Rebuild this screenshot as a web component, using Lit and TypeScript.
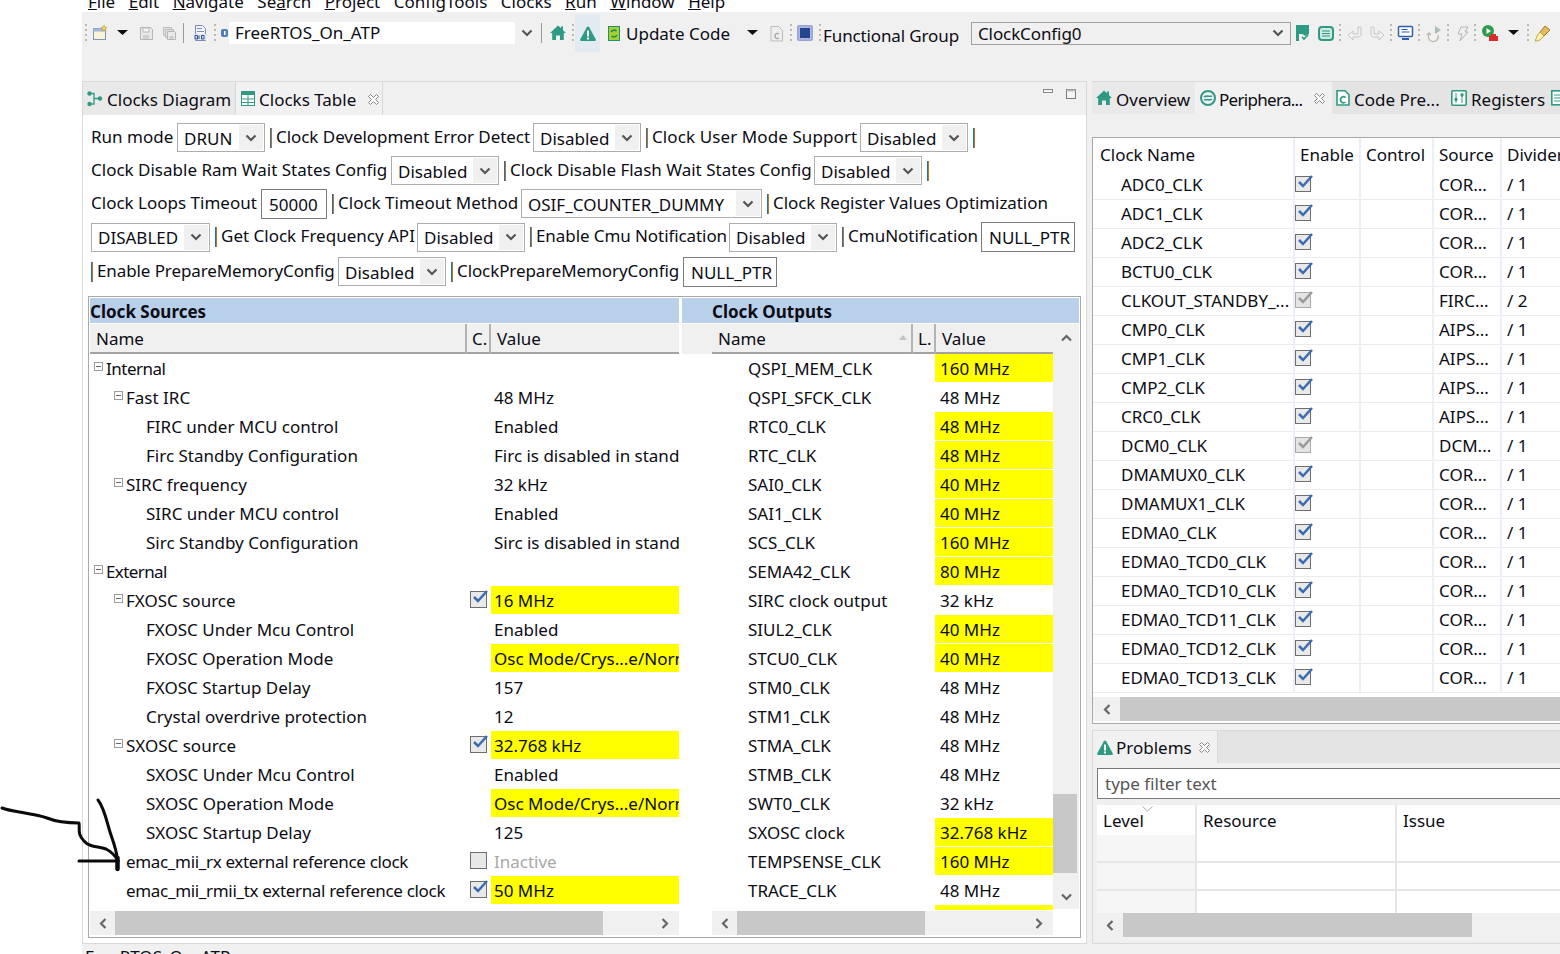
import { LitElement, html, css, svg } from "lit";
import { customElement } from "lit/decorators.js";

const T = "#2f9a83";
const icons: Record<string, any> = {
  grip: svg`<g fill="#bdb8ac"><rect x="0" y="0" width="2" height="2"/><rect x="0" y="5" width="2" height="2"/><rect x="0" y="10" width="2" height="2"/><rect x="0" y="15" width="2" height="2"/></g>`,
  newf: svg`<rect x="1.500" y="3.500" width="12" height="11" fill="#fbf3d6" stroke="#7d97b8"/><rect x="1.500" y="3.500" width="12" height="3" fill="#9fb9d8"/><path d="M12 0l1 2 2 .5-1.500 1.500.5 2-2-1-2 1 .5-2L9 2.500l2-.5z" fill="#f3d35b" stroke="#b89b3a" stroke-width=".6"/>`,
  drop: svg`<path d="M0 0h11L5.500 5z" fill="#111"/>`,
  save: svg`<path d="M1.500 1.500h10l2 2v10h-12z" fill="#e8e8e8" stroke="#b5b5b5"/><rect x="4" y="2" width="6" height="4" fill="#f6f6f6" stroke="#bbb"/><rect x="4" y="9" width="6" height="4" fill="#d0d0d0"/>`,
  saveall: svg`<path d="M1.500 1.500h8v8h-8z" fill="#e4e4e4" stroke="#bcbcbc"/><path d="M3.500 3.500h8v8h-8z" fill="#e4e4e4" stroke="#bcbcbc"/><path d="M5.500 5.500h7l1 1v7h-8z" fill="#e8e8e8" stroke="#b5b5b5"/><rect x="7.500" y="10" width="4" height="3" fill="#ccc"/>`,
  sep: svg`<rect x="0" y="0" width="1" height="20" fill="#9a9a9a"/>`,
  bin: svg`<path d="M1.500 .5h7l3 3v12h-10z" fill="#f4f4f8" stroke="#7b8db0"/><rect x="3" y="3" width="5" height="1" fill="#7b8db0"/><rect x="3" y="6" width="7" height="1" fill="#7b8db0"/><rect x="0" y="9" width="12.500" height="6" fill="#dfe6f2"/><path d="M1 10.500h2.500v3.500H1zM5 10.500v3.500M7.500 10.500h2.500v3.500H7.500z" fill="none" stroke="#2c4d8a"/>`,
  info: svg`<rect x="0" y="0" width="7" height="8" rx="2" fill="#4f7fb8"/><rect x="3" y="2" width="1.500" height="4" fill="#fff"/>`,
  chev: svg`<path d="M1.500 1.500L6 6l4.500-4.500" fill="none" stroke="#555" stroke-width="2.200"/>`,
  home: svg`<path d="M8 .5L0 8h2.200v7H6v-4.500h4V15h3.800V8H16l-3-2.800V1.500h-2v1.800z" fill="${T}"/>`,
  warn: svg`<path d="M8 .5c.5 0 .9.300 1.200.8l6.500 12c.5 1-.1 1.700-1 1.700H1.300c-.9 0-1.500-.7-1-1.700l6.500-12C7.100.8 7.500.5 8 .5z" fill="${T}"/><rect x="7" y="4.500" width="2" height="6" fill="#fff"/><rect x="7" y="11.500" width="2" height="2" fill="#fff"/>`,
  upd: svg`<rect x=".5" y=".5" width="11" height="14" fill="#a7d129" stroke="#1f8f7d"/><path d="M3 6c1-2 4-2.500 5.500-1M9 9c-1 2-4 2.500-5.500 1" fill="none" stroke="#1e8a5a" stroke-width="1.600"/>`,
  cdoc: svg`<path d="M1 .5h7.500l4 4v10.500H1z" fill="#eee" stroke="#bcbcbc"/><path d="M9 8a2.500 2.500 0 1 0 0 4" fill="none" stroke="#aaa" stroke-width="1.400"/>`,
  chip: svg`<rect x="0" y="0" width="16" height="16" rx="2" fill="#9aa4d4"/><path d="M3 1v14M5.500 1v14M8 1v14M10.500 1v14M13 1v14M1 3h14M1 5.500h14M1 8h14M1 10.500h14M1 13h14" stroke="#c9cfe8" stroke-width=".6"/><rect x="3" y="3" width="10" height="10" fill="#23478f"/>`,
  flag: svg`<path d="M0 0h13v9l-4 2-2-2 -1 1v-1H3v7H0z" fill="${T}"/><path d="M6 12l2 2 4-4" fill="none" stroke="${T}" stroke-width="1.600"/>`,
  gdoc: svg`<rect x="1" y="1" width="14" height="13" rx="3" fill="#cfeae3" stroke="${T}" stroke-width="2"/><path d="M4 5h8M4 7.500h8M4 10h8" stroke="${T}"/><path d="M12 14l3-3v3z" fill="${T}"/>`,
  undo: svg`<path d="M14 1v7c0 2-1 3-3 3H6v3L1 9l5-4v3h5V1z" fill="#f2f2f2" stroke="#c6c6c6"/>`,
  redo: svg`<path d="M1 1v7c0 2 1 3 3 3h5v3l5-5-5-4v3H4V1z" fill="#f2f2f2" stroke="#c6c6c6"/>`,
  mon: svg`<rect x=".5" y=".5" width="14" height="10" rx="1" fill="#fff" stroke="#2b62a8" stroke-width="1.500"/><path d="M3.500 3.500h6M3.500 6h8" stroke="#2b62a8"/><rect x="4" y="12" width="7" height="2" fill="#2b62a8"/>`,
  debug: svg`<path d="M9 0l6 4-6 4z" fill="#aebcb8"/><path d="M3 8a5 5 0 1 0 9 1M1 9l2-2 2 2" fill="#f2f2f2" stroke="#bfb8a8" stroke-width="1.300"/>`,
  bolt: svg`<path d="M5 1h7L9 6h3l-8 9 2-7H2z" fill="#eee" stroke="#b5b5b5"/>`,
  run: svg`<circle cx="6" cy="6" r="6" fill="#2d9a4e"/><path d="M4.500 3l4.500 3-4.500 3z" fill="#fff"/><rect x="7" y="11" width="9" height="5" fill="#d92b2b"/><rect x="9" y="9" width="5" height="2" fill="#d92b2b"/>`,
  brush: svg`<path d="M11 1l5 4-6 6-4-4z" fill="#e6b75d" stroke="#a67c2d"/><path d="M6 7l4 4-4 4c-2 1-4 1-5 1 1-1 1-3 2-5z" fill="#fff3a8" stroke="#bfa44a"/>`,
  diagram: svg`<circle cx="2.500" cy="2.500" r="2.200" fill="${T}"/><circle cx="2.500" cy="13" r="2.200" fill="${T}"/><circle cx="13" cy="7.500" r="2.200" fill="${T}"/><path d="M2.500 2.500H7V13H2.500M7 7.500h6" fill="none" stroke="${T}" stroke-width="1.300"/>`,
  table: svg`<rect x=".5" y=".5" width="13" height="14" fill="#fff" stroke="${T}"/><rect x="0" y="0" width="14" height="4" fill="${T}"/><path d="M0 8h14M0 11.500h14M7 4v11" stroke="${T}"/>`,
  x: svg`<path d="M1.500 3.500L3.500 1.500 6.500 4.500 9.500 1.500 11.500 3.500 8.500 6.500 11.500 9.500 9.500 11.500 6.500 8.500 3.500 11.500 1.500 9.500 4.500 6.500z" fill="#fff" stroke="#858585"/>`,
  periph: svg`<circle cx="8" cy="8" r="7" fill="none" stroke="${T}" stroke-width="2"/><path d="M4 7c2-2 5 0 8-1M4 10c3-1 6 1 8-1" fill="none" stroke="${T}" stroke-width="1.600"/>`,
  code: svg`<path d="M1 .8h8l4 4V15H1z" fill="#fff" stroke="${T}" stroke-width="1.600"/><path d="M9.500 7.500a3 3 0 1 0 0 4.500" fill="none" stroke="${T}" stroke-width="1.600"/>`,
  regs: svg`<rect x=".8" y=".8" width="14.400" height="14.400" rx="1" fill="#fff" stroke="${T}" stroke-width="1.600"/><path d="M5 3v10M11 3v10" stroke="${T}"/><circle cx="5" cy="9.500" r="1.700" fill="${T}"/><circle cx="11" cy="5" r="1.700" fill="${T}"/>`,
  list: svg`<rect x=".8" y=".8" width="12" height="14" fill="#fff" stroke="${T}" stroke-width="1.600"/><path d="M3 5h8M3 8h8M3 11h8" stroke="${T}"/>`,
  min: svg`<rect x=".5" y=".5" width="9" height="3" fill="#f5f5f5" stroke="#8a8a8a"/>`,
  max: svg`<rect x=".5" y=".5" width="9" height="9" fill="#f5f5f5" stroke="#7a7a7a"/><rect x=".5" y=".5" width="9" height="2" fill="#bbb"/>`,
  left: svg`<path d="M6.500 1L2 5.500l4.500 4.500" fill="none" stroke="#666" stroke-width="2.200"/>`,
  right: svg`<path d="M1.500 1L6 5.500 1.500 10" fill="none" stroke="#666" stroke-width="2.200"/>`,
  up: svg`<path d="M1 6.500L5.500 2 10 6.500" fill="none" stroke="#666" stroke-width="2.200"/>`,
  down: svg`<path d="M1 1.500L5.500 6 10 1.500" fill="none" stroke="#666" stroke-width="2.200"/>`,
  sort: svg`<path d="M0 5L4 0l4 5z" fill="#c4c4c4"/>`,
  vee: svg`<path d="M.5.500L5.500 5l5-4.500" fill="none" stroke="#aaa"/>`,
};

const ic = (n: string, w: number, h: number, cls = "") =>
  html`<svg class="ic ${cls}" width=${w} height=${h} viewBox="0 0 ${w} ${h}">${icons[n]}</svg>`;

const toolbarA: [number, string, number, number][] = [
  [85, "grip", 2, 18], [92, "newf", 16, 16], [117, "drop", 11, 6], [139, "save", 15, 15], [162, "saveall", 15, 15],
  [183, "sep", 1, 20], [194, "bin", 13, 16], [214, "grip", 2, 18], [221, "info", 7, 8],
];

const leftRows: [number, string, string, string, string][] = [
  [0, "e", "Internal", "", ""], [1, "e", "Fast IRC", "48 MHz", ""], [2, "", "FIRC under MCU control", "Enabled", ""],
  [2, "", "Firc Standby Configuration", "Firc is disabled in standby", ""], [1, "e", "SIRC frequency", "32 kHz", ""],
  [2, "", "SIRC under MCU control", "Enabled", ""], [2, "", "Sirc Standby Configuration", "Sirc is disabled in standby", ""],
  [0, "e", "External", "", ""], [1, "e", "FXOSC source", "16 MHz", "cy"], [2, "", "FXOSC Under Mcu Control", "Enabled", ""],
  [2, "", "FXOSC Operation Mode", "Osc Mode/Crys...e/Normal", "y"], [2, "", "FXOSC Startup Delay", "157", ""],
  [2, "", "Crystal overdrive protection", "12", ""], [1, "e", "SXOSC source", "32.768 kHz", "cy"],
  [2, "", "SXOSC Under Mcu Control", "Enabled", ""], [2, "", "SXOSC Operation Mode", "Osc Mode/Crys...e/Normal", "y"],
  [2, "", "SXOSC Startup Delay", "125", ""], [1, "", "emac_mii_rx external reference clock", "Inactive", "cd"],
  [1, "", "emac_mii_rmii_tx external reference clock", "50 MHz", "cy"],
];
const nameSpacing: Record<string, number> = {
  Internal: -0.5, External: -0.6,
  "emac_mii_rx external reference clock": -0.33, "emac_mii_rmii_tx external reference clock": -0.32,
};
const rightRows: [string, string, boolean][] = [
  ["QSPI_MEM_CLK", "160 MHz", true], ["QSPI_SFCK_CLK", "48 MHz", false], ["RTC0_CLK", "48 MHz", true], ["RTC_CLK", "48 MHz", true],
  ["SAI0_CLK", "40 MHz", true], ["SAI1_CLK", "40 MHz", true], ["SCS_CLK", "160 MHz", true], ["SEMA42_CLK", "80 MHz", true],
  ["SIRC clock output", "32 kHz", false], ["SIUL2_CLK", "40 MHz", true], ["STCU0_CLK", "40 MHz", true], ["STM0_CLK", "48 MHz", false],
  ["STM1_CLK", "48 MHz", false], ["STMA_CLK", "48 MHz", false], ["STMB_CLK", "48 MHz", false], ["SWT0_CLK", "32 kHz", false],
  ["SXOSC clock", "32.768 kHz", true], ["TEMPSENSE_CLK", "160 MHz", true], ["TRACE_CLK", "48 MHz", false], ["", "", true],
];
const clocks: [string, boolean, string, string][] = [
  ["ADC0_CLK", true, "COR...", "/ 1"], ["ADC1_CLK", true, "COR...", "/ 1"], ["ADC2_CLK", true, "COR...", "/ 1"],
  ["BCTU0_CLK", true, "COR...", "/ 1"], ["CLKOUT_STANDBY_...", false, "FIRC...", "/ 2"], ["CMP0_CLK", true, "AIPS...", "/ 1"],
  ["CMP1_CLK", true, "AIPS...", "/ 1"], ["CMP2_CLK", true, "AIPS...", "/ 1"], ["CRC0_CLK", true, "AIPS...", "/ 1"],
  ["DCM0_CLK", false, "DCM...", "/ 1"], ["DMAMUX0_CLK", true, "COR...", "/ 1"], ["DMAMUX1_CLK", true, "COR...", "/ 1"],
  ["EDMA0_CLK", true, "COR...", "/ 1"], ["EDMA0_TCD0_CLK", true, "COR...", "/ 1"], ["EDMA0_TCD10_CLK", true, "COR...", "/ 1"],
  ["EDMA0_TCD11_CLK", true, "COR...", "/ 1"], ["EDMA0_TCD12_CLK", true, "COR...", "/ 1"], ["EDMA0_TCD13_CLK", true, "COR...", "/ 1"],
];

type F = ["l", string, number, number?] | ["p"] | ["s", string, number] | ["i", string, number];
const form: F[][] = [
  [["l", "Run mode", 83], ["s", "DRUN", 88], ["p"], ["l", "Clock Development Error Detect", 254, -0.05], ["s", "Disabled", 108], ["p"], ["l", "Clock User Mode Support", 205, 0.1], ["s", "Disabled", 108], ["p"]],
  [["l", "Clock Disable Ram Wait States Config", 297], ["s", "Disabled", 108], ["p"], ["l", "Clock Disable Flash Wait States Config", 301], ["s", "Disabled", 108], ["p"]],
  [["l", "Clock Loops Timeout", 167], ["i", "50000", 66], ["p"], ["l", "Clock Timeout Method", 180], ["s", "OSIF_COUNTER_DUMMY", 241], ["p"], ["l", "Clock Register Values Optimization", 274, -0.07]],
  [["s", "DISABLED", 119], ["p"], ["l", "Get Clock Frequency API", 193], ["s", "Disabled", 108], ["p"], ["l", "Enable Cmu Notification", 190, -0.08], ["s", "Disabled", 108], ["p"], ["l", "CmuNotification", 130], ["i", "NULL_PTR", 94]],
  [["p"], ["l", "Enable PrepareMemoryConfig", 238, -0.1], ["s", "Disabled", 108], ["p"], ["l", "ClockPrepareMemoryConfig", 223, -0.1], ["i", "NULL_PTR", 94]],
];

const menu: [string, string, string][] = [
  ["", "F", "ile"], ["", "E", "dit"], ["", "N", "avigate"], ["Se", "a", "rch"], ["", "P", "roject"], ["ConfigTools", "", ""],
  ["Clocks", "", ""], ["", "R", "un"], ["", "W", "indow"], ["", "H", "elp"],
];

@customElement("app-root")
export class AppRoot extends LitElement {
  static styles = css`
    :host { display: block; width: 1560px; height: 954px; overflow: hidden; position: relative; background: #fff;
      font-family: "Noto Sans", "Open Sans", sans-serif; font-size: 17px; color: #0c0c14; }
    * { box-sizing: border-box; }
    .ic { display: block; flex: none; overflow: visible; }
    .menu { height: 12px; display: flex; align-items: flex-end; padding-left: 88px; gap: 13.5px; overflow: hidden; line-height: 20px; white-space: nowrap; }
    .menu span { flex: none; }
    .main { margin-left: 82px; height: 942px; background: #f0f0f0; display: flex; flex-direction: column; }
    .toolbar { height: 40px; padding-top: 2px; display: flex; align-items: center; position: relative; white-space: nowrap; flex: none; }
    .tb { flex: none; }
    .tb-gap { height: 29px; flex: none; }
    .combo { background: #fff; height: 22px; width: 286px; margin-left: 1px; padding-left: 6px; line-height: 22px; flex: none; }
    .combo2 { width: 320px; height: 23px; background: #f0f0f0; border: 1px solid #a0a0a0; display: flex; justify-content: space-between; align-items: center; padding: 0 8px 0 6px; flex: none; letter-spacing: -.1px; }
    .tile { width: 25px; height: 38px; background: #e3ebf2; display: flex; align-items: center; justify-content: center; flex: none; align-self: flex-start; margin-top: 0; }
    .fg { flex: none; margin-top: 4px; letter-spacing: -.13px; }
    .panels { display: flex; height: 863px; flex: none; }
    .lp { width: 1005px; border: 1px solid #d9d9d9; background: #fff; display: flex; flex-direction: column; flex: none; }
    .tabs { height: 33px; display: flex; background: #f0f0f0; flex: none; position: relative; align-items: stretch; white-space: nowrap; }
    .tab { display: flex; align-items: center; gap: 4px; padding-left: 4px; flex: none; background: #e9e9e9; }
    .tab.on { background: #f1f1f1; border-right: 1px solid #d9d9d9; border-left: 1px solid #d9d9d9; }
    .lp .tab.t1 { width: 152px; } .lp .tab.t2 { width: 148px; padding-left: 5px; gap: 4px; }
    .tt { margin-top: 2px; }
    .tab .x { margin-left: 7px; margin-top: 1px; }
    .winbtns { margin-left: auto; display: flex; gap: 13px; padding: 7px 10px 0 0; align-items: flex-start; }
    .lbody { flex: 1; display: flex; flex-direction: column; padding: 6px 5px 0 5px; min-height: 0; }
    .row { display: flex; align-items: center; height: 33px; padding-left: 3px; white-space: nowrap; flex: none; }
    .row.r3 { height: 34px; } .row.r4 { height: 35px; }
    .row .l { line-height: 24px; margin-top: -2px; flex: none; }
    .pipe { width: 2px; height: 20px; background: #2a6cb0; border-right: 1px solid #b8791e; margin: 0 4px 0 5px; flex: none; }
    .pipe:first-child { margin-left: 0; }
    .sel { height: 29px; margin: 0 0 0 3px; border: 1px solid #adadad; display: flex; align-items: center; justify-content: space-between; padding: 0 1px 0 6px; flex: none; line-height: 26px; }
    .sel:first-child { margin-left: 0; }
    .sel b { font-weight: 400; margin-top: 2px; }
    .btn { width: 24px; height: 25px; background: #f0f0f0; display: flex; align-items: center; justify-content: center; flex: none; }
    .inp { height: 30px; margin: 0 0 0 3px; border: 1px solid #7a7a7a; padding: 1px 0 0 7px; line-height: 28px; flex: none; }
    .frame { height: 642px; margin-top: 7px; border: 1px solid #a9a9a9; padding: 1px; position: relative; display: flex; gap: 3px; flex: none; }
    .col { display: flex; flex-direction: column; flex: none; position: relative; }
    .band { height: 26px; background: #b9d0ea; font-weight: 700; line-height: 27px; flex: none; white-space: nowrap; border-bottom: 1px solid #fff; }
    .head { height: 30px; display: flex; background: #f0f0f0; flex: none; }
    .h { border-right: 2px solid #b4b4b4; border-bottom: 2px solid #a3a3a3; padding-left: 6px; line-height: 30px; flex: none; overflow: hidden; position: relative; background: #f0f0f0; white-space: nowrap; }
    .h.n { width: 377px; } .h.c { width: 24px; padding-left: 5px; } .h.v { width: 188px; border-right: 0; }
    .h.n2 { width: 201px; } .h.c2 { width: 23px; padding-left: 5px; } .h.v2 { width: 118px; border-right: 0; }
    .blank { width: 30px; flex: none; }
    .sortm { position: absolute; right: 4px; top: 11px; }
    .rows { height: 556px; overflow: hidden; flex: none; }
    .tr { height: 29px; display: flex; align-items: flex-start; white-space: nowrap; overflow: hidden; }
    .tree { width: 377px; height: 28px; line-height: 29px; display: flex; align-items: center; flex: none; }
    .tree.d0 { padding-left: 4px; } .tree.d1 { padding-left: 24px; } .tree.d2 { padding-left: 56px; }
    .tree.d1.plain { padding-left: 36px; }
    .exp { width: 9px; height: 9px; border: 1px solid #9c9c9c; margin-right: 3px; position: relative; flex: none; margin-top: -3px; }
    .exp::after { content: ""; position: absolute; left: 1px; right: 1px; top: 3px; height: 1px; background: #666; }
    .chk { width: 24px; flex: none; padding: 5px 0 0 3px; }
    .val { width: 188px; height: 28px; line-height: 29px; padding-left: 3px; overflow: hidden; flex: none; }
    .yl { background: #ff0; }
    .off { color: #a8a8a8; }
    .cb { display: block; width: 17px; height: 17px; border: 1px solid #6e6e6e; background: #e9e9e9; position: relative; flex: none; }
    .cb svg { position: absolute; left: 1px; top: -3px; overflow: visible; }
    .cb.dis { border-color: #aaa; background: #e4e4e4; }
    .cb.ina { border-color: #6e6e6e; background: #e8e8e8; }
    .rname { width: 223px; padding-left: 36px; flex: none; margin-left: 30px; line-height: 29px; }
    .rval { width: 118px; height: 28px; line-height: 29px; padding-left: 5px; flex: none; overflow: hidden; }
    .hs { height: 24px; display: flex; align-items: center; flex: none; background: #f0f0f0; position: relative; margin-top: 1px; }
    .hs .cell { width: 25px; display: flex; justify-content: center; flex: none; }
    .hs .th { height: 100%; background: #c8c8c8; flex: none; }
    .hs .end { margin-left: auto; width: 28px; }
    .vs { width: 26px; background: #f0f0f0; height: 585px; position: absolute; right: 0; top: 26px; display: flex; flex-direction: column; align-items: center; }
    .vs .th { position: absolute; left: 0; right: 2px; top: 470px; height: 79px; background: #c8c8c8; }
    .vs .a1 { margin-top: 10px; } .vs .a2 { position: absolute; bottom: 8px; }
    .rcol { display: flex; flex-direction: column; flex: 1; min-width: 0; margin-left: 5px; }
    .rtop { height: 643px; flex: none; display: flex; flex-direction: column; position: relative; }
    .rtabs { background: #e4e4e4; border-top: 1px solid #d9d9d9; }
    .rtabs .tab { padding-left: 4px; }
    .rtabs .tt { margin-top: 3px; }
    .rtabs .t1 { width: 103px; } .rtabs .t2 { width: 137px; background: #f1f1f1; gap: 3px; padding-left: 5px; }
    .rtabs .t3 { width: 115px; background: #e4e4e4; } .rtabs .t4 { width: 100px; background: #e4e4e4; } .rtabs .t5 { width: 20px; background: #e4e4e4; }
    .rtabs .t2 .x { margin-left: 8px; }
    .narrow { letter-spacing: -.7px; }
    .rspace { height: 23px; flex: none; }
    .rframe { flex: 1; border: 1px solid #a9a9a9; border-right: 0; background: #fff; min-height: 0; display: flex; flex-direction: column; overflow: hidden; }
    .chead { height: 33px; display: flex; flex: none; line-height: 34px; }
    .chead div, .ctr div { flex: none; border-right: 2px solid #ebf0f8; white-space: nowrap; }
    .c1 { width: 202px; padding-left: 7px; } .c2 { width: 66px; padding-left: 5px; } .c3 { width: 73px; padding-left: 5px; } .c4 { width: 68px; padding-left: 5px; } .c5 { width: 70px; padding-left: 5px; }
    .ctr { height: 29px; display: flex; align-items: center; border-bottom: 1px solid #ebebeb; }
    .ctr div { height: 29px; line-height: 28px; }
    .ctr .c1 { padding-left: 28px; }
    .ctr .c2 { padding-left: 0; display: flex; align-items: center; }
    .ctr .cb { width: 16px; height: 16px; margin-top: -3px; }
    .rows2 { height: 526px; overflow: hidden; flex: none; }
    .hs2 { height: 24px; margin-top: 0; }
    .hs2 .cell { width: 27px; }
    .rbot { height: 214px; margin-top: 6px; border: 1px solid #d9d9d9; border-right: 0; flex: none; display: flex; flex-direction: column; }
    .ptabs { height: 32px; background: #e4e4e4; display: flex; flex: none; }
    .ptabs .tab { width: 125px; background: #f1f1f1; padding-left: 4px; gap: 3px; border-right: 1px solid #d9d9d9; }
    .ptabs .x { margin-left: 3px; margin-top: 0; }
    .filter { height: 31px; margin: 5px 0 0 4px; border: 1px solid #7a7a7a; border-right: 0; background: #fff; color: #555; padding-left: 7px; line-height: 30px; flex: none; }
    .ptable { height: 109px; margin: 5px 0 0 4px; background: #fff; flex: none; display: flex; position: relative; border-top: 1px solid #eee; }
    .pc { border-right: 2px solid #e6e6e6; flex: none; display: flex; flex-direction: column; }
    .pc1 { width: 100px; background: #f6f6f6; } .pc2 { width: 200px; } .pc3 { flex: 1; border-right: 0; }
    .ph { height: 30px; padding-left: 6px; line-height: 32px; position: relative; background: #fff; }
    .pr { height: 28px; border-bottom: 2px solid #e6e6e6; flex: none; }
    .vee { position: absolute; left: 45px; top: 1px; }
    .hs3 { margin: 0 0 0 4px; height: 24px; }
    .hs3 .cell { width: 26px; }
    .status { height: 8px; overflow: hidden; line-height: 20px; padding-left: 3px; margin-top: 3px; white-space: nowrap; flex: none; }
    .ink { position: absolute; left: 0; top: 790px; pointer-events: none; }
  `;

  private flow(items: [number, string, number, number][]) {
    let p = 82;
    return items.map(([x, n, w, h]) => {
      const m = x - p;
      p = x + w;
      return this.tb(n, w, h, m);
    });
  }

  private tb(n: string, w: number, h: number, m: number) {
    return html`<span class="tb" style="margin-left:${m}px">${ic(n, w, h)}</span>`;
  }

  private field(f: F) {
    if (f[0] === "l") return html`<span class="l" style="width:${f[2]}px;letter-spacing:${f[3] ?? 0}px">${f[1]}</span>`;
    if (f[0] === "p") return html`<span class="pipe"></span>`;
    if (f[0] === "s") return html`<span class="sel" style="width:${f[2]}px"><b>${f[1]}</b><span class="btn">${ic("chev", 12, 8)}</span></span>`;
    return html`<span class="inp" style="width:${f[2]}px">${f[1]}</span>`;
  }

  private tick(color: string) {
    return html`<svg width="18" height="15" viewBox="0 0 18 15"><path d="M2 8l4 4 9-10" fill="none" stroke="${color}" stroke-width="2.500"/></svg>`;
  }

  private check(dis = false) {
    return html`<span class="cb ${dis ? "dis" : ""}">${this.tick(dis ? "#9a9a9a" : "#3a6cb0")}</span>`;
  }

  render() {
    return html`
      <div class="menu">${menu.map(([a, u, b]) => html`<span>${a}${u ? html`<u>${u}</u>` : ""}${b}</span>`)}</div>
      <div class="main">
        <div class="toolbar">
          ${this.flow(toolbarA)}
          <span class="combo">FreeRTOS_On_ATP</span>
          ${this.tb("chev", 12, 8, 6)}
          ${this.tb("sep", 1, 20, 8)}
          ${this.tb("home", 16, 16, 8)}
          ${this.tb("grip", 2, 18, 6)}
          <span class="tile" style="margin-left:1px">${ic("warn", 16, 15)}</span>
          ${this.tb("upd", 12, 15, 8)}
          <span class="tb" style="margin-left:6px">Update Code</span>
          ${this.tb("drop", 11, 6, 17)}
          ${this.tb("cdoc", 13, 15, 12)}
          ${this.tb("grip", 2, 18, 7)}
          ${this.tb("chip", 16, 16, 5)}
          ${this.tb("grip", 2, 18, 6)}
          <span class="fg" style="margin-left:2px">Functional Group</span>
          <span style="margin-left:12px" class="combo2"><span>ClockConfig0</span>${ic("chev", 10, 8)}</span>
          ${this.tb("flag", 13, 16, 5)}
          ${this.tb("gdoc", 16, 15, 9)}
          ${this.tb("grip", 2, 18, 5)}
          ${this.tb("undo", 15, 15, 6)}
          ${this.tb("redo", 15, 15, 8)}
          ${this.tb("grip", 2, 18, 5)}
          ${this.tb("mon", 15, 15, 6)}
          ${this.tb("grip", 2, 18, 5)}
          ${this.tb("debug", 15, 15, 6)}
          ${this.tb("grip", 2, 18, 6)}
          ${this.tb("bolt", 13, 15, 7)}
          ${this.tb("grip", 2, 18, 5)}
          ${this.tb("run", 16, 16, 6)}
          ${this.tb("drop", 11, 6, 10)}
          ${this.tb("grip", 2, 18, 8)}
          ${this.tb("brush", 17, 16, 5)}
        </div>
        <div class="tb-gap"></div>
        <div class="panels">
          <div class="lp">
            <div class="tabs">
              <div class="tab t1">${ic("diagram", 16, 15)}<span class="tt">Clocks Diagram</span></div>
              <div class="tab t2 on">${ic("table", 14, 15)}<span class="tt">Clocks Table</span><span class="x">${ic("x", 13, 13)}</span></div>
              <div class="winbtns">${ic("min", 10, 4)}${ic("max", 10, 10)}</div>
            </div>
            <div class="lbody">
              ${form.map((r, i) => html`<div class="row r${i}">${r.map((f) => this.field(f))}</div>`)}
              <div class="frame">
                <div class="col" style="width:589px">
                  <div class="band">Clock Sources</div>
                  <div class="head"><div class="h n">Name</div><div class="h c">C.</div><div class="h v">Value</div></div>
                  <div class="rows">
                    ${leftRows.map(([d, e, n, v, f]) => html`<div class="tr">
                      <div class="tree d${d} ${e ? "" : "plain"}">${e ? html`<span class="exp"></span>` : ""}<span style="letter-spacing:${nameSpacing[n] ?? 0}px">${n}</span></div>
                      <div class="chk">${f === "cd" ? html`<span class="cb ina"></span>` : f === "cy" ? this.check() : ""}</div>
                      <div class="val ${f.endsWith("y") ? "yl" : ""} ${f === "cd" ? "off" : ""}">${v}</div>
                    </div>`)}
                  </div>
                  <div class="hs"><span class="cell">${ic("left", 8, 11)}</span><span class="th" style="width:488px"></span><span class="cell end">${ic("right", 8, 11)}</span></div>
                </div>
                <div class="col" style="width:397px">
                  <div class="band" style="padding-left:30px">Clock Outputs</div>
                  <div class="head" style="width:371px"><div class="blank"></div><div class="h n2">Name<span class="sortm">${ic("sort", 8, 5)}</span></div><div class="h c2">L.</div><div class="h v2">Value</div></div>
                  <div class="rows">
                    ${rightRows.map(([n, v, y]) => html`<div class="tr"><div class="rname">${n}</div><div class="rval ${y ? "yl" : ""}">${v}</div></div>`)}
                  </div>
                  <div class="hs" style="margin-left:30px;width:341px"><span class="cell">${ic("left", 8, 11)}</span><span class="th" style="width:188px"></span><span class="cell end">${ic("right", 8, 11)}</span></div>
                  <div class="vs"><span class="a1">${ic("up", 11, 8)}</span><span class="th"></span><span class="a2">${ic("down", 11, 8)}</span></div>
                </div>
              </div>
            </div>
          </div>
          <div class="rcol">
            <div class="rtop">
              <div class="tabs rtabs">
                <div class="tab t1">${ic("home", 16, 16)}<span class="tt">Overview</span></div>
                <div class="tab t2">${ic("periph", 16, 16)}<span class="tt narrow">Periphera...</span><span class="x">${ic("x", 13, 13)}</span></div>
                <div class="tab t3">${ic("code", 14, 16)}<span class="tt">Code Pre...</span></div>
                <div class="tab t4">${ic("regs", 16, 16)}<span class="tt">Registers</span></div>
                <div class="tab t5">${ic("list", 14, 16)}</div>
              </div>
              <div class="rspace"></div>
              <div class="rframe">
                <div class="chead"><div class="c1">Clock Name</div><div class="c2">Enable</div><div class="c3">Control</div><div class="c4">Source</div><div class="c5">Divider</div></div>
                <div class="rows2">
                  ${clocks.map(([n, en, s, d]) => html`<div class="ctr"><div class="c1">${n}</div><div class="c2">${this.check(!en)}</div><div class="c3"></div><div class="c4">${s}</div><div class="c5">${d}</div></div>`)}
                </div>
                <div class="hs hs2"><span class="cell">${ic("left", 8, 11)}</span><span class="th" style="width:440px"></span></div>
              </div>
            </div>
            <div class="rbot">
              <div class="ptabs"><div class="tab">${ic("warn", 16, 15)}<span>Problems</span><span class="x">${ic("x", 13, 13)}</span></div></div>
              <div class="filter">type filter text</div>
              <div class="ptable">
                <div class="pc pc1"><div class="ph">Level<span class="vee">${ic("vee", 11, 6)}</span></div><div class="pr"></div><div class="pr"></div></div>
                <div class="pc pc2"><div class="ph">Resource</div><div class="pr"></div><div class="pr"></div></div>
                <div class="pc pc3"><div class="ph">Issue</div><div class="pr"></div><div class="pr"></div></div>
              </div>
              <div class="hs hs3"><span class="cell">${ic("left", 8, 11)}</span><span class="th" style="width:349px"></span></div>
            </div>
          </div>
        </div>
        <div class="status">FreeRTOS_On_ATP</div>
      </div>
      <svg class="ink" width="130" height="90" viewBox="0 790 130 90"><g fill="none" stroke="#0a0a0a" stroke-width="3" stroke-linecap="round" stroke-linejoin="round">
        <path d="M2 808c10 4 30 5 45 10 10 4 22 5 32 5 1 6-2 11 5 18 6 7 14 5 22 8 6 3 9 6 12 12"/>
        <path d="M98 800c4 5 7 14 10 25 3 12 8 22 9 32"/>
        <path d="M79 861h39"/><path d="M117.500 858v11" stroke-width="4.500"/></g></svg>
    `;
  }
}
